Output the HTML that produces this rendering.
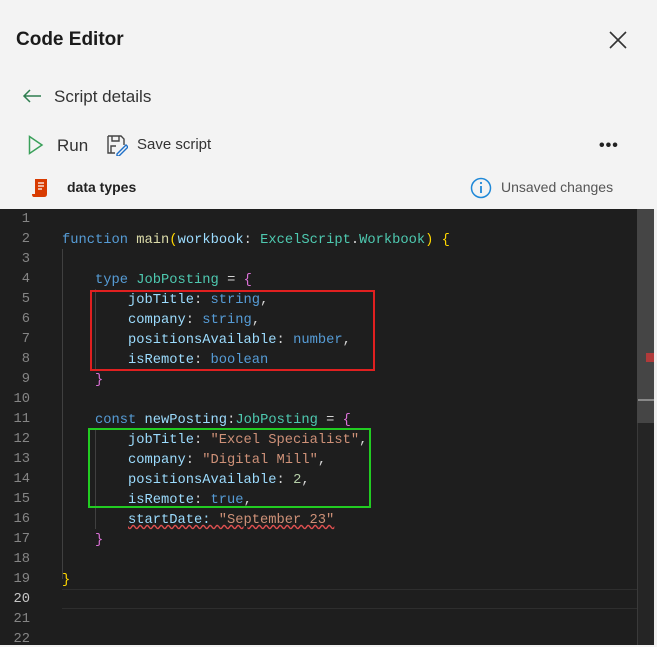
<!DOCTYPE html>
<html><head><meta charset="utf-8"><style>
*{margin:0;padding:0;box-sizing:border-box}
body{width:657px;height:645px;background:#f3f3f3;font-family:"Liberation Sans",sans-serif;position:relative;overflow:hidden;color:#222}
.abs{position:absolute}
.ed{position:absolute;left:0;top:209px;width:654px;height:436px;background:#1e1e1e}
.ln{position:absolute;left:0;width:30px;text-align:right;color:#858585;font:13.75px "Liberation Mono",monospace}
.code{position:absolute;left:62px;white-space:pre;font:13.75px "Liberation Mono",monospace;color:#d4d4d4;margin-top:2px}
.k{color:#569cd6}.t{color:#4ec9b0}.s{color:#ce9178}.n{color:#b5cea8}.f{color:#dcdcaa}.y{color:#ffd700}.p{color:#da70d6}.v{color:#9cdcfe}
</style></head><body>
<div class="abs" style="left:16px;top:29px;font-size:19px;font-weight:bold;color:#1b1b1b">Code Editor</div>
<svg class="abs" style="left:609px;top:31px" width="18" height="18"><path d="M1 1L17 17M17 1L1 17" stroke="#333" stroke-width="1.6"/></svg>
<svg class="abs" style="left:22px;top:88px" width="20" height="16"><path d="M19 8H2M8 2L2 8L8 14" stroke="#2e7d4f" stroke-width="1.5" fill="none"/></svg>
<div class="abs" style="left:54px;top:87px;font-size:17px;color:#333">Script details</div>
<svg class="abs" style="left:28px;top:135px" width="16" height="20"><path d="M1.5 1.5L14 10L1.5 18.5Z" stroke="#3aa05a" stroke-width="1.5" fill="none"/></svg>
<div class="abs" style="left:57px;top:136px;font-size:17px;color:#333">Run</div>
<svg class="abs" style="left:106px;top:134px" width="22" height="22"><path d="M2 2H15L18 5V11M2 2V19H9M6 2V7H13V2M5 19V12H10" stroke="#444" stroke-width="1.4" fill="none"/><path d="M11 20L20 11L22 13L13 22H11Z" stroke="#1e6fc8" stroke-width="1.4" fill="none"/></svg>
<div class="abs" style="left:137px;top:136px;font-size:15px;color:#333">Save script</div>
<div class="abs" style="left:599px;top:137px;font-size:16px;font-weight:bold;letter-spacing:1px">•••</div>
<svg class="abs" style="left:31px;top:177px" width="20" height="22"><path d="M4 2H16V17Q16 20 13 20H3Q1 20 1 17H4Z" fill="#d83b01"/><path d="M7 6H13M7 9H13M7 12H11" stroke="#fff" stroke-width="1.2"/></svg>
<div class="abs" style="left:67px;top:179px;font-size:14px;font-weight:bold;color:#222">data types</div>
<svg class="abs" style="left:470px;top:177px" width="22" height="22"><circle cx="11" cy="11" r="9.5" stroke="#1e88d8" stroke-width="1.5" fill="none"/><path d="M11 9V16" stroke="#1e88d8" stroke-width="1.8"/><circle cx="11" cy="6" r="1.1" fill="#1e88d8"/></svg>
<div class="abs" style="left:501px;top:179px;font-size:14px;color:#555">Unsaved changes</div>
<div class="ed">
<div class="abs" style="left:62px;top:380px;width:575px;height:20px;border-top:1px solid #2e2e2e;border-bottom:1px solid #2e2e2e"></div>
<div class="abs" style="left:62px;top:40px;width:1px;height:330px;background:#404040"></div>
<div class="abs" style="left:95px;top:80px;width:1px;height:80px;background:#404040"></div>
<div class="abs" style="left:95px;top:220px;width:1px;height:100px;background:#404040"></div>
<div class="abs" style="left:637px;top:0;width:17px;height:436px;background:#252525;border-left:1px solid #3a3a3a"></div>
<div class="abs" style="left:637px;top:0;width:17px;height:214px;background:#454545"></div>
<div class="abs" style="left:638px;top:190px;width:16px;height:2px;background:#888"></div>
<div class="abs" style="left:646px;top:144px;width:8px;height:9px;background:#b03a3a"></div>
</div>
<div class="abs" style="left:654px;top:209px;width:3px;height:436px;background:#f0f0f0"></div>
<div class="ln" style="top:212px">1</div><div class="ln" style="top:232px">2</div><div class="ln" style="top:252px">3</div><div class="ln" style="top:272px">4</div><div class="ln" style="top:292px">5</div><div class="ln" style="top:312px">6</div><div class="ln" style="top:332px">7</div><div class="ln" style="top:352px">8</div><div class="ln" style="top:372px">9</div><div class="ln" style="top:392px">10</div><div class="ln" style="top:412px">11</div><div class="ln" style="top:432px">12</div><div class="ln" style="top:452px">13</div><div class="ln" style="top:472px">14</div><div class="ln" style="top:492px">15</div><div class="ln" style="top:512px">16</div><div class="ln" style="top:532px">17</div><div class="ln" style="top:552px">18</div><div class="ln" style="top:572px">19</div><div class="ln" style="top:592px;color:#c6c6c6">20</div><div class="ln" style="top:612px">21</div><div class="ln" style="top:632px">22</div>
<div class="code" style="top:231px"><span class="k">function</span> <span class="f">main</span><span class="y">(</span><span class="v">workbook</span>: <span class="t">ExcelScript</span>.<span class="t">Workbook</span><span class="y">)</span> <span class="y">{</span></div>
<div class="code" style="top:271px">    <span class="k">type</span> <span class="t">JobPosting</span> = <span class="p">{</span></div>
<div class="code" style="top:291px">        <span class="v">jobTitle</span>: <span class="k">string</span>,</div>
<div class="code" style="top:311px">        <span class="v">company</span>: <span class="k">string</span>,</div>
<div class="code" style="top:331px">        <span class="v">positionsAvailable</span>: <span class="k">number</span>,</div>
<div class="code" style="top:351px">        <span class="v">isRemote</span>: <span class="k">boolean</span></div>
<div class="code" style="top:371px">    <span class="p">}</span></div>
<div class="code" style="top:411px">    <span class="k">const</span> <span class="v">newPosting</span>:<span class="t">JobPosting</span> = <span class="p">{</span></div>
<div class="code" style="top:431px">        <span class="v">jobTitle</span>: <span class="s">"Excel Specialist"</span>,</div>
<div class="code" style="top:451px">        <span class="v">company</span>: <span class="s">"Digital Mill"</span>,</div>
<div class="code" style="top:471px">        <span class="v">positionsAvailable</span>: <span class="n">2</span>,</div>
<div class="code" style="top:491px">        <span class="v">isRemote</span>: <span class="k">true</span>,</div>
<div class="code" style="top:511px">        <span class="v" style="text-decoration:underline wavy #e05050">startDate: </span><span class="s" style="text-decoration:underline wavy #e05050">"September 23"</span></div>
<div class="code" style="top:531px">    <span class="p">}</span></div>
<div class="code" style="top:571px"><span class="y">}</span></div>
<div class="abs" style="left:90px;top:290px;width:285px;height:81px;border:2px solid #e02020"></div>
<div class="abs" style="left:88px;top:428px;width:283px;height:80px;border:2px solid #22cc22"></div>
</body></html>
